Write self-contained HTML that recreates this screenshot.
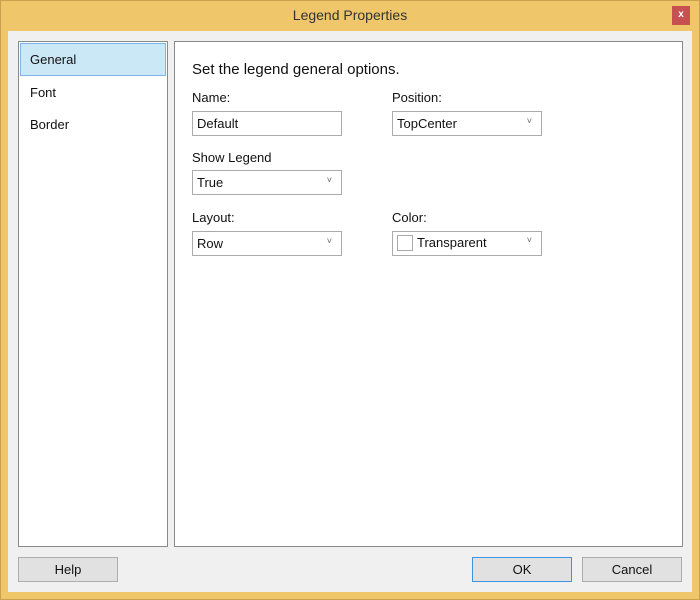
<!DOCTYPE html>
<html><head><style>
*{margin:0;padding:0;box-sizing:border-box}
body{width:700px;height:600px;background:#efc76a;font-family:"Segoe UI","Liberation Sans",sans-serif;font-size:13px;color:#111;position:relative;overflow:hidden}
.a{position:absolute}
.frame{left:0;top:0;width:700px;height:600px;border:1px solid #c9a24e}
.title{left:0;top:7px;width:700px;text-align:center;font-size:14px;color:#333}
.close{left:672px;top:6px;width:18px;height:19px;background:#c75050;color:#fff;font-size:10px;text-align:center;line-height:18px;font-weight:bold}
.client{left:8px;top:31px;width:684px;height:561px;background:#f0f0f0}
.panel{background:#fff;border:1px solid #8a8a8a}
.inp{background:#fff;border:1px solid #ababab;height:25px;padding-left:4px;line-height:24px}
.chev{position:absolute;right:9px;top:-3px;font-size:9px;color:#666}
.btn{background:#e1e1e1;border:1px solid #adadad;height:25px;text-align:center;line-height:24px}
</style></head><body>
<div class="a frame"></div>
<div class="a title">Legend Properties</div>
<div class="a close">x</div>
<div class="a client"></div>
<div class="a panel" style="left:18px;top:41px;width:150px;height:506px"></div>
<div class="a" style="left:20px;top:43px;width:146px;height:33px;background:#cbe8f6;border:1px solid #7eb4ea"></div>
<div class="a" style="left:30px;top:52px">General</div>
<div class="a" style="left:30px;top:85px">Font</div>
<div class="a" style="left:30px;top:117px">Border</div>
<div class="a panel" style="left:174px;top:41px;width:509px;height:506px"></div>
<div class="a" style="left:192px;top:61px;font-size:15px">Set the legend general options.</div>
<div class="a" style="left:192px;top:90px">Name:</div>
<div class="a" style="left:392px;top:90px">Position:</div>
<div class="a inp" style="left:192px;top:111px;width:150px">Default</div>
<div class="a inp" style="left:392px;top:111px;width:150px">TopCenter<span class="chev">˅</span></div>
<div class="a" style="left:192px;top:150px">Show Legend</div>
<div class="a inp" style="left:192px;top:170px;width:150px">True<span class="chev">˅</span></div>
<div class="a" style="left:192px;top:210px">Layout:</div>
<div class="a" style="left:392px;top:210px">Color:</div>
<div class="a inp" style="left:192px;top:231px;width:150px">Row<span class="chev">˅</span></div>
<div class="a inp" style="left:392px;top:231px;width:150px;padding-left:24px;line-height:22px">Transparent<span class="chev">˅</span><span style="position:absolute;left:4px;top:3px;width:16px;height:16px;border:1px solid #aaa;background:#fff"></span></div>
<div class="a btn" style="left:18px;top:557px;width:100px">Help</div>
<div class="a btn" style="left:472px;top:557px;width:100px;border-color:#3c93e0">OK</div>
<div class="a btn" style="left:582px;top:557px;width:100px">Cancel</div>
</body></html>
